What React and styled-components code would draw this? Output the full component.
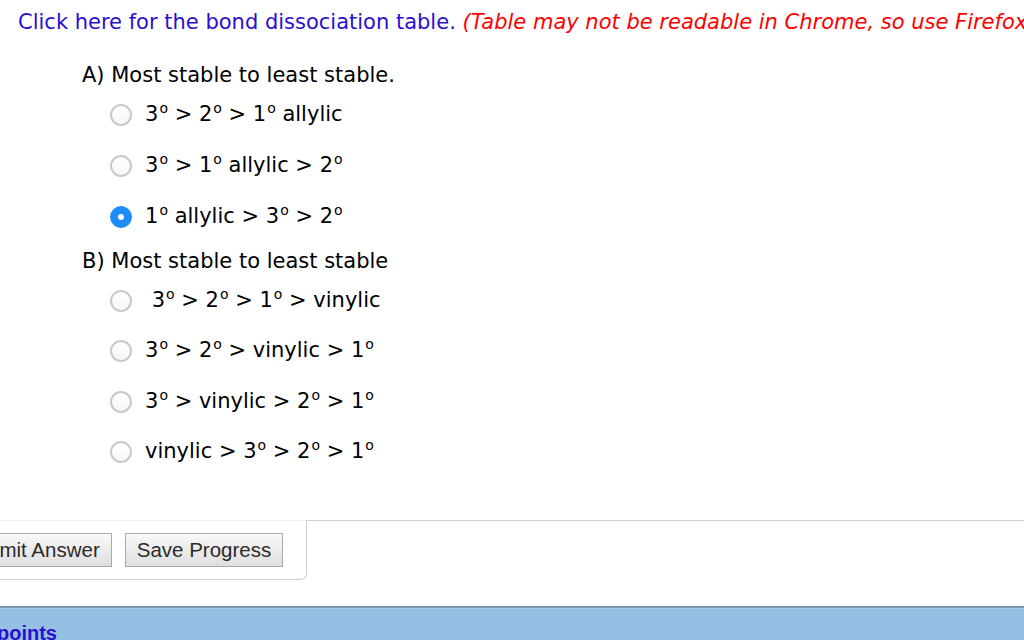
import React from 'react';
import styled, { createGlobalStyle } from 'styled-components';

const GlobalStyle = createGlobalStyle`
  html, body {
    margin: 0;
    padding: 0;
    background: #fff;
    overflow: hidden;
  }
  body {
    font-family: "DejaVu Sans", Verdana, sans-serif;
    color: #000;
  }
`;

const Page = styled.div`
  width: 1024px;
  height: 640px;
  overflow: hidden;
  display: flex;
  flex-direction: column;
`;

const Intro = styled.div`
  padding: 10px 0 0 18px;
  font-size: 21px;
  white-space: nowrap;
  line-height: 24px;
`;

const Link = styled.a`
  color: #2a0fd0;
  text-decoration: none;
`;

const Warning = styled.i`
  color: #ff0000;
`;

const Question = styled.div`
  padding-left: 82px;
  font-size: 21px;
  line-height: 24px;
`;

const Heading = styled.div`
  margin-top: ${(p) => p.$top}px;
`;

const Options = styled.ul`
  list-style: none;
  margin: ${(p) => p.$top}px 0 0 0;
  padding: 0 0 0 28px;
`;

const Option = styled.li`
  display: flex;
  align-items: center;
  height: ${(p) => p.$h}px;
`;

const Radio = styled.span`
  width: 22px;
  height: 22px;
  box-sizing: border-box;
  border-radius: 50%;
  margin-right: 13px;
  flex: none;
  ${(p) =>
    p.$checked
      ? `background: radial-gradient(circle, #fff 0 2.6px, #1e8cf8 3.4px); border: 1px solid #1e8cf8;`
      : `background: linear-gradient(#fff, #f6f6f6); border: 2px solid #c9c9c9;`}
`;

const Deg = styled.sup`
  font-size: 14px;
  vertical-align: 0;
  position: relative;
  top: -8px;
  margin-left: 1px;
`;

const Footer = styled.div`
  margin-top: ${(p) => p.$top}px;
  display: flex;
  align-items: flex-start;
  border-top: 1px solid #f2f2f2;
`;

const ButtonPanel = styled.div`
  display: flex;
  gap: 13px;
  margin-left: -49px;
  padding: 13px 23px 12px 0;
  border-right: 1px solid #cfcfcf;
  border-bottom: 1px solid #cfcfcf;
  border-bottom-right-radius: 6px;
  margin-top: -1px;
`;

const TopRule = styled.div`
  flex: 1;
  margin-top: -1px;
  border-top: 1px solid #cfcfcf;
`;

const Button = styled.button`
  font-family: "Liberation Sans", Arial, sans-serif;
  font-size: 20.5px;
  color: #2b2b2b;
  height: 34px;
  padding: 0 11px;
  border: 1px solid #a9a9a9;
  border-radius: 0;
  background: linear-gradient(#f9f9f9, #dedede);
  box-shadow: inset 0 1px 0 #fff;
`;

const Bar = styled.div`
  margin-top: 26px;
  flex: 1;
  border-top: 2px solid #7d98b2;
  background: #96c0e3;
  box-shadow: inset 0 1px 0 #a9cde9;
  font-family: "Liberation Sans", Arial, sans-serif;
  font-weight: bold;
  font-size: 20px;
  color: #2a0fd0;
  padding: 14px 0 0 0;
  overflow: hidden;
  white-space: nowrap;
`;

const Clipped = styled.span`
  display: inline-block;
  margin-left: -3px;
`;

const D = () => <Deg>o</Deg>;

const partA = [
  <>3<D /> &gt; 2<D /> &gt; 1<D /> allylic</>,
  <>3<D /> &gt; 1<D /> allylic &gt; 2<D /></>,
  <>1<D /> allylic &gt; 3<D /> &gt; 2<D /></>,
];

const partB = [
  <>&nbsp;3<D /> &gt; 2<D /> &gt; 1<D /> &gt; vinylic</>,
  <>3<D /> &gt; 2<D /> &gt; vinylic &gt; 1<D /></>,
  <>3<D /> &gt; vinylic &gt; 2<D /> &gt; 1<D /></>,
  <>vinylic &gt; 3<D /> &gt; 2<D /> &gt; 1<D /></>,
];

export default function App() {
  return (
    <Page>
      <GlobalStyle />
      <Intro>
        <Link href="#">Click here for the bond dissociation table.</Link>{' '}
        <Warning>(Table may not be readable in Chrome, so use Firefox)</Warning>
      </Intro>
      <Question>
        <Heading $top={29}>A) Most stable to least stable.</Heading>
        <Options $top={2}>
          {partA.map((o, i) => (
            <Option key={i} $h={51}>
              <Radio $checked={i === 2} />
              <span>{o}</span>
            </Option>
          ))}
        </Options>
        <Heading $top={7}>B) Most stable to least stable</Heading>
        <Options $top={3}>
          {partB.map((o, i) => (
            <Option key={i} $h={50.3}>
              <Radio />
              <span>{o}</span>
            </Option>
          ))}
        </Options>
      </Question>
      <Footer $top={43}>
        <ButtonPanel>
          <Button>Submit Answer</Button>
          <Button>Save Progress</Button>
        </ButtonPanel>
        <TopRule />
      </Footer>
      <Bar>
        <Clipped>points</Clipped>
      </Bar>
    </Page>
  );
}
